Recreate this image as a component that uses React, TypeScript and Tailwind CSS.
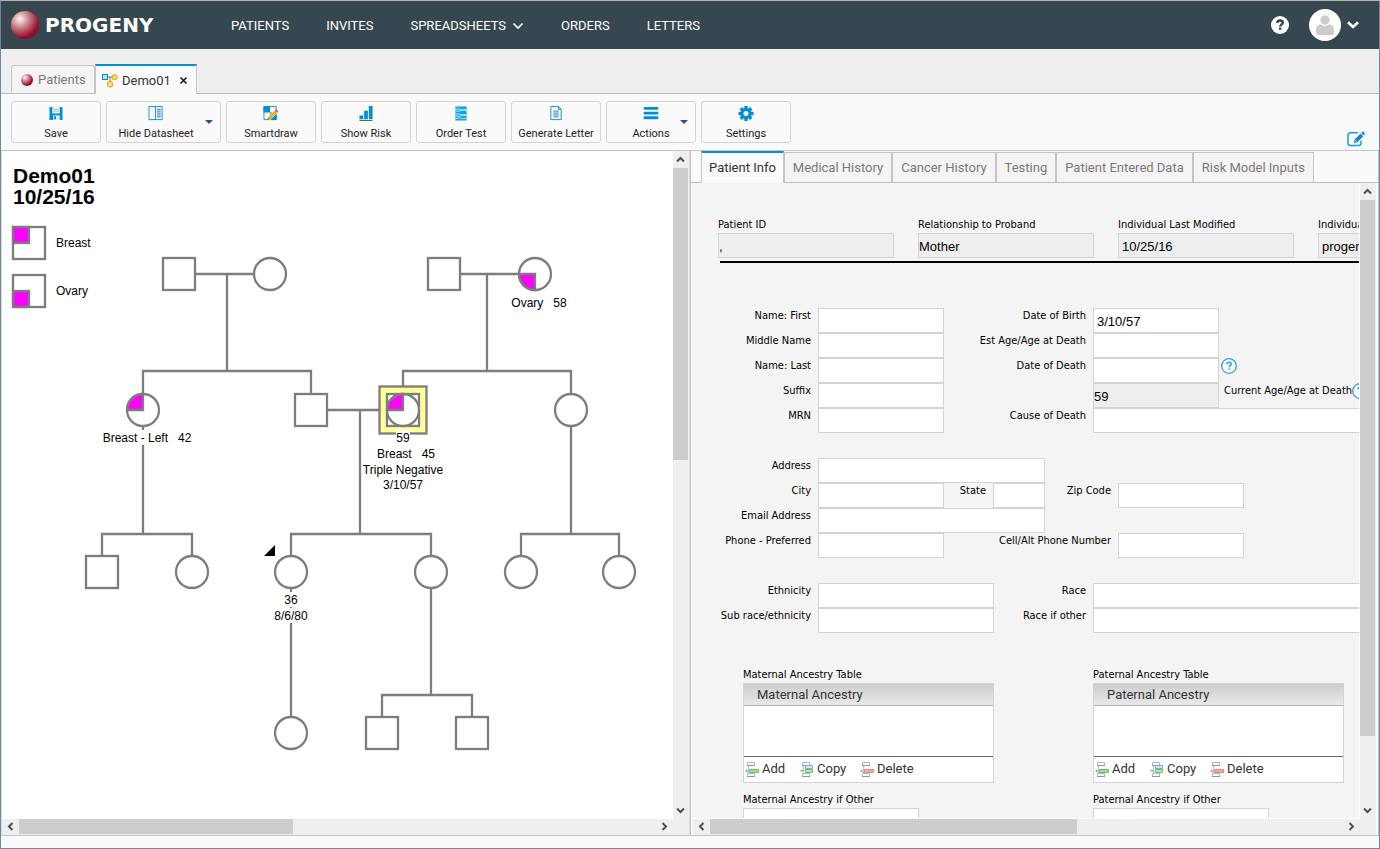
import { useState } from "react";
import type { ReactNode } from "react";

function classNames(...classes: string[]) {
  return classes.filter(Boolean).join(" ");
}

/* ---------- icons ---------- */

function Ball({ id, size }: { id: string; size: number }) {
  return (
    <svg width={size} height={size} viewBox="0 0 28 28" className="shrink-0">
      <defs>
        <radialGradient id={id} cx="0.32" cy="0.28" r="0.78">
          <stop offset="0" stopColor="#fdf3f2" />
          <stop offset="0.2" stopColor="#e3bcbc" />
          <stop offset="0.5" stopColor="#bd6a74" />
          <stop offset="0.85" stopColor="#960f30" />
          <stop offset="1" stopColor="#8d0a2a" />
        </radialGradient>
      </defs>
      <circle cx="14" cy="14" r="14" fill={`url(#${id})`} />
    </svg>
  );
}

function PedigreeIcon() {
  return (
    <svg width="16" height="14" viewBox="0 0 16 14" className="shrink-0">
      <path d="M6 3h4M8 3v5" stroke="#777" fill="none" />
      <rect x="0.5" y="0.5" width="5" height="5" fill="#bfe0fb" stroke="#1583c8" />
      <circle cx="12.5" cy="3.2" r="2.6" fill="#ffdf5a" stroke="#d9a514" />
      <circle cx="8" cy="10.2" r="2.9" fill="#ffdf5a" stroke="#d9a514" />
    </svg>
  );
}

function SaveIcon() {
  return (
    <svg width="16" height="16" viewBox="0 0 16 16">
      <path d="M1 1h13l1 1v13H1z" fill="#008fd5" />
      <path d="M4 1h8v7H4z" fill="#e9eef1" />
      <path d="M5 3.5h6M5 5.5h6" stroke="#b5bfc5" />
      <path d="M5 10h7v5H5z" fill="#e9eef1" />
      <path d="M6 11h2v3H6z" fill="#008fd5" />
    </svg>
  );
}

function DatasheetIcon() {
  return (
    <svg width="16" height="16" viewBox="0 0 16 16">
      <path d="M0.5 0.5h14v14h-14zM7.5 0.5v14" fill="#fff" stroke="#008fd5" />
      <path d="M9 3.5h4M9 5.5h4M9 7.5h4M9 9.5h4M9 11.5h4" stroke="#1672a8" />
    </svg>
  );
}

function SmartdrawIcon() {
  return (
    <svg width="18" height="16" viewBox="0 0 18 16">
      <path d="M1.5 0.5h13v14h-13z" fill="#fff" stroke="#008fd5" />
      <path d="M1 0h7v7H1zM8 7h7v8H8z" fill="#008fd5" />
      <path d="M5 15l1-3.600 7.600-7.300 2.600 2.600-7.600 7.400z" fill="#f5a90b" stroke="#fff" strokeWidth="0.600" />
      <path d="M13.200 4.500l1.300-1.100 2.400 2.400-1.100 1.200z" fill="#dd4a35" />
      <path d="M5 15l.8-2.400 1.600 1.600z" fill="#7a4a12" />
    </svg>
  );
}

function RiskIcon() {
  return (
    <svg width="16" height="16" viewBox="0 0 16 16">
      <path d="M1 10h4v4H1zM6 5h4v9H6zM11 0h4v14h-4z" fill="#008fd5" />
      <path d="M1 15.500H15" stroke="#555" />
    </svg>
  );
}

function DnaIcon() {
  return (
    <svg width="12" height="16" viewBox="0 0 12 16">
      <path d="M0 0.500h12v15H0z" fill="#0fa3e6" />
      <path
        d="M0 3.500c4-1.500 7 2 12 0M0 5c4 2 7-2 12 .5M0 8.500c4-1 7 2 12 .5M0 10.500c4 2 7-2 12 0M0 13.500c4-2 7 1 12-.5"
        stroke="#d5f0fc"
        strokeWidth="0.900"
        fill="none"
      />
    </svg>
  );
}

function LetterIcon() {
  return (
    <svg width="14" height="16" viewBox="0 0 14 16">
      <path d="M1.500 0.500h8l3 3v11h-11z" fill="#fff" stroke="#008fd5" />
      <path d="M9.500 0.500v3h3" fill="none" stroke="#008fd5" />
      <path d="M4 5.500h6M4 7.500h6M4 9.500h6M4 11.500h6" stroke="#1583c8" />
    </svg>
  );
}

function ActionsIcon() {
  return (
    <svg width="16" height="16" viewBox="0 0 16 16">
      <path d="M1.500 2.500h13M1.500 7.500h13M1.500 12.500h13" stroke="#008fd5" strokeWidth="3" strokeLinecap="round" />
    </svg>
  );
}

function GearIcon() {
  return (
    <svg width="16" height="16" viewBox="0 0 16 16">
      <g stroke="#008fd5" strokeWidth="3.600">
        <path d="M8 0v16M0 8h16M2.400 2.400l11.200 11.200M13.600 2.400L2.400 13.600" />
      </g>
      <circle cx="8" cy="8" r="5.800" fill="#008fd5" />
      <circle cx="8" cy="8" r="2.700" fill="#fafafa" />
    </svg>
  );
}

function EditIcon() {
  return (
    <svg width="18" height="16" viewBox="0 0 18 16">
      <path
        d="M11 1.800H3.200A2.200 2.200 0 0 0 1 4v8.300a2.200 2.200 0 0 0 2.200 2.200h8.600a2.200 2.200 0 0 0 2.200-2.200V9.500"
        fill="none"
        stroke="#1b9ae4"
        strokeWidth="1.500"
      />
      <path d="M7 12l.6-3.400 6-6.100 2.700 2.700-6 6.100z" fill="#0f87d6" />
      <path d="M14.200 1.900l1-1c.4-.4 1-.4 1.400 0l1 1c.4.4.4 1 0 1.400l-.9 1z" fill="#0f87d6" />
      <path d="M8.600 9.300l1.200 1.200" stroke="#fff" />
    </svg>
  );
}

function HelpIcon() {
  return (
    <svg width="16" height="16" viewBox="0 0 16 16" className="shrink-0">
      <circle cx="8" cy="8" r="7.300" fill="#fff" stroke="#2d9fe0" strokeWidth="1.300" />
      <path
        d="M5.800 6.200c.1-1.300 1-2 2.200-2s2.200.7 2.200 1.800c0 1.500-2 1.500-2 3.200M8.200 10.600v1.500"
        fill="none"
        stroke="#2d9fe0"
        strokeWidth="1.600"
      />
    </svg>
  );
}

function RowIcon({ kind }: { kind: "add" | "copy" | "delete" }) {
  const fill = kind === "delete" ? "#f5a79c" : kind === "copy" ? "#b9f08a" : "#a5dd8d";
  const stroke = kind === "delete" ? "#e58a80" : "#6fbf63";
  return (
    <svg width="14" height="16" viewBox="0 0 14 16" className="shrink-0">
      <path d="M2.500 1.500h7v3h-7zM2.500 12.500h7v3h-7z" fill="#fff" stroke="#9fb6d8" />
      <path d="M2 4.500h8M2 15.500h8" stroke="#7f96bd" />
      <path d="M3.500 5v7" stroke="#b4c6df" />
      {kind === "copy" && <path d="M5.500 4.500h7v3h-7z" fill="#cfe6ff" stroke="#7aa5ee" />}
      <path d={kind === "copy" ? "M5.500 8.500h7v3h-7z" : "M4.500 8.500h9v3h-9z"} fill={fill} stroke={stroke} />
      {kind === "copy" ? (
        <path d="M0 9h4L2 11z" fill={stroke} />
      ) : (
        <path d="M0 10l2.500-2v4z" fill={stroke} />
      )}
    </svg>
  );
}

/* ---------- scrollbars ---------- */

function Arrow({ dir }: { dir: "up" | "down" | "left" | "right" }) {
  const paths = {
    up: "M1 6.500L4.500 3L8 6.500",
    down: "M1 2.500L4.500 6L8 2.500",
    left: "M6.500 1L3 4.500L6.500 8",
    right: "M2.500 1L6 4.500L2.500 8",
  };
  return (
    <button
      type="button"
      aria-label={`Scroll ${dir}`}
      className={classNames(
        "flex shrink-0 items-center justify-center",
        dir === "up" || dir === "down" ? "h-[17px] w-[15px]" : "h-[15px] w-[17px]"
      )}
    >
      <svg width="9" height="9" viewBox="0 0 9 9">
        <path d={paths[dir]} fill="none" stroke="#505050" strokeWidth="2" />
      </svg>
    </button>
  );
}

function VerticalBar({ thumb }: { thumb: number }) {
  return (
    <div className="flex w-4 shrink-0 flex-col bg-[#efefef]">
      <Arrow dir="up" />
      <div className="flex-1">
        <div className="w-[15px] bg-[#cdcdcd]" style={{ height: `${thumb}%` }} />
      </div>
      <Arrow dir="down" />
    </div>
  );
}

function HorizontalBar({ thumb }: { thumb: number }) {
  return (
    <div className="mr-4 flex h-4 shrink-0">
      <Arrow dir="left" />
      <div className="flex-1">
        <div className="h-[15px] bg-[#cdcdcd]" style={{ width: `${thumb}%` }} />
      </div>
      <Arrow dir="right" />
    </div>
  );
}

/* ---------- header and toolbar ---------- */

const nav = ["PATIENTS", "INVITES", "SPREADSHEETS", "ORDERS", "LETTERS"];

function Header() {
  return (
    <header className="flex h-12 shrink-0 items-center bg-[#37474f] text-white">
      <a href="#" className="ml-[10px] flex w-[220px] items-center gap-[6px]">
        <Ball id="logo-ball" size={28} />
        <span className="font-['DejaVu_Sans',sans-serif] text-[20px] leading-6 font-bold">PROGENY</span>
      </a>
      <nav className="flex items-center gap-[37px] pt-[2px]">
        {nav.map((item) => (
          <a key={item} href="#" className="flex items-center gap-[6px] text-[13px] leading-4">
            {item}
            {item === "SPREADSHEETS" && (
              <svg width="12" height="8" viewBox="0 0 12 8">
                <path d="M1.500 1.500L6 6l4.500-4.500" fill="none" stroke="#fff" strokeWidth="1.700" />
              </svg>
            )}
          </a>
        ))}
      </nav>
      <div className="mr-5 ml-auto flex items-center">
        <button type="button" aria-label="Help" className="mr-5">
          <svg width="18" height="18" viewBox="0 0 18 18">
            <circle cx="9" cy="9" r="9" fill="#fff" />
            <path
              d="M6.200 6.900c.2-1.600 1.300-2.400 2.900-2.400 1.500 0 2.700.8 2.700 2.100 0 1.900-2.600 1.800-2.600 3.800M9.200 11.600v2.200"
              fill="none"
              stroke="#37474f"
              strokeWidth="2.400"
            />
          </svg>
        </button>
        <button type="button" aria-label="Account" className="flex items-center gap-[6px]">
          <svg width="32" height="32" viewBox="0 0 32 32">
            <circle cx="16" cy="16" r="16" fill="#fff" />
            <path d="M7 22c0-4 1.500-6.500 4.500-6.500h9c3 0 4.500 2.500 4.500 6.500v2a2 2 0 0 1-2 2H9a2 2 0 0 1-2-2z" fill="#ccc" />
            <circle cx="16" cy="11" r="5.300" fill="#ccc" stroke="#fff" strokeWidth="1.200" />
          </svg>
          <svg width="12" height="8" viewBox="0 0 12 8">
            <path d="M1 1.200L6 6l5-4.800" fill="none" stroke="#fff" strokeWidth="2.600" />
          </svg>
        </button>
      </div>
    </header>
  );
}

function DocumentTabs() {
  return (
    <div className="flex h-[45px] shrink-0 items-end border-b border-[#bdbdbd] bg-[#eee] pl-[10px] text-[13px] leading-4">
      <button
        type="button"
        className="flex h-7 w-[84px] items-center gap-[5px] rounded-t-[3px] border border-b-0 border-[#c5c5c5] bg-[#f4f4f4] pt-px pl-[9px] text-[#7a7a7a]"
      >
        <Ball id="tab-ball" size={12} />
        Patients
      </button>
      <div className="-mb-px flex h-[30px] w-[102px] items-center border-x border-t-2 border-x-[#c5c5c5] border-t-[#0092d2] bg-[#fafafa] pt-px pl-[6px] text-[#333]">
        <button type="button" className="flex items-center gap-[4px]">
          <PedigreeIcon />
          Demo01
        </button>
        <button type="button" aria-label="Close Demo01" className="ml-2">
          <svg width="9" height="9" viewBox="0 0 9 9">
            <path d="M1.500 1.500l6 6M7.500 1.500l-6 6" stroke="#111" strokeWidth="1.500" />
          </svg>
        </button>
      </div>
    </div>
  );
}

const tools = [
  { name: "Save", icon: <SaveIcon />, width: "w-[90px]", menu: false },
  { name: "Hide Datasheet", icon: <DatasheetIcon />, width: "w-[115px] pr-[15px]", menu: true },
  { name: "Smartdraw", icon: <SmartdrawIcon />, width: "w-[90px]", menu: false },
  { name: "Show Risk", icon: <RiskIcon />, width: "w-[90px]", menu: false },
  { name: "Order Test", icon: <DnaIcon />, width: "w-[90px]", menu: false },
  { name: "Generate Letter", icon: <LetterIcon />, width: "w-[90px]", menu: false },
  { name: "Actions", icon: <ActionsIcon />, width: "w-[90px]", menu: true },
  { name: "Settings", icon: <GearIcon />, width: "w-[90px]", menu: false },
];

function Toolbar() {
  return (
    <div className="flex h-[57px] shrink-0 items-start gap-[5px] border-b border-[#c5c5c5] bg-[#fafafa] pt-[7px] pl-[10px]">
      {tools.map((tool) => (
        <button
          key={tool.name}
          type="button"
          className={classNames(
            "relative flex h-[42px] flex-col items-center gap-[5px] rounded-[3px] border border-[#d3d3d3] pt-[4px] text-[11px] leading-4 whitespace-nowrap text-[#222]",
            tool.width
          )}
        >
          {tool.icon}
          {tool.name}
          {tool.menu && (
            <svg width="8" height="4" viewBox="0 0 8 4" className="absolute top-[18px] right-[7px]">
              <path d="M0 0h8L4 4z" fill="#34489c" />
            </svg>
          )}
        </button>
      ))}
      <button type="button" aria-label="Edit" className="mt-[30px] mr-[14px] ml-auto">
        <EditIcon />
      </button>
    </div>
  );
}

/* ---------- pedigree ---------- */

const males = [
  [179, 274],
  [444, 274],
  [311, 410],
  [102, 572],
  [382, 733],
  [472, 733],
];

const females = [
  [270, 274],
  [535, 274],
  [143, 410],
  [571, 410],
  [192, 572],
  [291, 572],
  [431, 572],
  [521, 572],
  [619, 572],
  [291, 733],
];

const lines = [
  "M195 274H254M227 274V371M143 394V371H311V394",
  "M460 274H519M487 274V371M403 387V371H571V394",
  "M327 410H379M360 410V534M291 556V534H431V556",
  "M143 426V534M102 556V534H192V556",
  "M571 426V534M521 556V534H619V556",
  "M291 588V717",
  "M431 588V695M382 717V695H472V717",
];

const captions = [
  { x: 539, y: 307, w: 58, text: "Ovary   58" },
  { x: 147, y: 442, w: 92, text: "Breast - Left   42" },
  { x: 403, y: 442, w: 14, text: "59" },
  { x: 406, y: 458, w: 60, text: "Breast   45" },
  { x: 403, y: 474, w: 80, text: "Triple Negative" },
  { x: 403, y: 489, w: 40, text: "3/10/57" },
  { x: 291, y: 604, w: 14, text: "36" },
  { x: 291, y: 620, w: 34, text: "8/6/80" },
];

function Pedigree() {
  return (
    <svg
      width="670"
      height="667"
      viewBox="2 151 670 667"
      className="font-['Liberation_Sans',Arial,sans-serif] text-[12px]"
    >
      <g fill="#fff" stroke="#7d7d7d" strokeWidth="2.300">
        {lines.map((d) => (
          <path key={d} d={d} fill="none" />
        ))}
        <rect x="379.500" y="386.500" width="47" height="47" fill="#ffff99" />
        <rect x="387" y="394" width="32" height="32" />
        {males.map(([x, y]) => (
          <rect key={`${x}-${y}`} x={x - 16} y={y - 16} width="32" height="32" />
        ))}
        {females.map(([x, y]) => (
          <circle key={`${x}-${y}`} cx={x} cy={y} r="16" />
        ))}
        <circle cx="403" cy="410" r="16" />
        <path d="M535 274H519A16 16 0 0 0 535 290Z" fill="#f0f" />
        <path d="M143 410H127A16 16 0 0 1 143 394Z" fill="#f0f" />
        <path d="M403 410H387A16 16 0 0 1 403 394Z" fill="#f0f" />
        <rect x="13" y="227" width="32" height="32" />
        <rect x="13" y="227" width="16" height="16" fill="#f0f" />
        <rect x="13" y="275" width="32" height="32" />
        <rect x="13" y="291" width="16" height="16" fill="#f0f" />
      </g>
      <path d="M275 545v11h-11z" fill="#000" />
      <g className="text-[21px] font-bold">
        <text x="13" y="183">Demo01</text>
        <text x="13" y="204">10/25/16</text>
      </g>
      <text x="56" y="247">Breast</text>
      <text x="56" y="295">Ovary</text>
      {captions.map((c) => (
        <g key={c.text}>
          <rect x={c.x - c.w / 2} y={c.y - 12} width={c.w} height="15" fill="#fff" />
          <text x={c.x} y={c.y} textAnchor="middle" className="whitespace-pre">
            {c.text}
          </text>
        </g>
      ))}
    </svg>
  );
}

/* ---------- datasheet ---------- */

function Box({
  id,
  width,
  value = "",
  readOnly = false,
  flush = false,
}: {
  id: string;
  width: string;
  value?: string;
  readOnly?: boolean;
  flush?: boolean;
}) {
  return (
    <input
      id={id}
      type="text"
      defaultValue={value}
      readOnly={readOnly}
      className={classNames(
        "h-[25px] shrink-0 border border-[#d3d3d3] pt-px font-['Liberation_Sans',Arial,sans-serif] text-[13px] text-black outline-none",
        readOnly ? "bg-[#eee]" : "bg-white",
        flush ? "pl-0" : "pl-[3px]",
        width
      )}
    />
  );
}

function Field({
  id,
  label,
  labelWidth,
  width,
  value = "",
}: {
  id: string;
  label: string;
  labelWidth: string;
  width: string;
  value?: string;
}) {
  return (
    <>
      <label htmlFor={id} className={classNames("shrink-0 pr-[7px] text-right", labelWidth)}>
        {label}
      </label>
      <Box id={id} width={width} value={value} />
    </>
  );
}

function Row({ children }: { children: ReactNode }) {
  return <div className="flex h-[25px] items-start">{children}</div>;
}

const summary = [
  { id: "patient-id", label: "Patient ID", value: ",", flush: true },
  { id: "relationship", label: "Relationship to Proband", value: "Mother", flush: true },
  { id: "modified", label: "Individual Last Modified", value: "10/25/16", flush: false },
  { id: "modified-by", label: "Individual Last Modified By", value: "progeny", flush: false },
];

function AncestryTable({ side }: { side: string }) {
  return (
    <div className="w-[251px] shrink-0">
      <div>{side} Ancestry Table</div>
      <div className="border border-[#d3d3d3] bg-white font-[Roboto,sans-serif] text-[13px] text-[#333]">
        <table className="w-full">
          <thead>
            <tr>
              <th className="h-[21px] border-b border-[#b5b5b5] bg-linear-to-b from-[#cecece] to-[#e9e9e9] pt-[2px] pl-[13px] text-left leading-4 font-normal">
                {side} Ancestry
              </th>
            </tr>
          </thead>
          <tbody>
            <tr>
              <td className="h-[51px]" />
            </tr>
          </tbody>
        </table>
        <div className="flex h-[26px] items-center border-t border-[#666] pb-[2px] pl-px leading-4">
          <button type="button" className="flex w-[55px] items-center gap-[3px]">
            <RowIcon kind="add" />
            Add
          </button>
          <button type="button" className="flex w-[60px] items-center gap-[3px]">
            <RowIcon kind="copy" />
            Copy
          </button>
          <button type="button" className="flex items-center gap-[3px]">
            <RowIcon kind="delete" />
            Delete
          </button>
        </div>
      </div>
      <label htmlFor={`${side}-other`} className="mt-[9px] block">
        {side} Ancestry if Other
      </label>
      <Box id={`${side}-other`} width="w-[176px]" />
    </div>
  );
}

function Datasheet() {
  return (
    <form className="pt-[34px] font-['DejaVu_Sans_Condensed','DejaVu_Sans',sans-serif] text-[11px] leading-4 whitespace-nowrap text-black">
      <div className="flex gap-6 pl-[25px]">
        {summary.map((s) => (
          <div key={s.id} className="flex w-[176px] shrink-0 flex-col">
            <label htmlFor={s.id}>{s.label}</label>
            <Box id={s.id} width="w-[176px]" value={s.value} readOnly flush={s.flush} />
          </div>
        ))}
      </div>
      <hr className="mt-[3px] ml-[27px] border-t-2 border-black" />

      <div className="mt-[45px]">
        <Row>
          <Field id="first" label="Name: First" labelWidth="w-[125px]" width="w-[126px]" />
          <Field id="dob" label="Date of Birth" labelWidth="w-[149px]" width="w-[126px]" value="3/10/57" />
        </Row>
        <Row>
          <Field id="middle" label="Middle Name" labelWidth="w-[125px]" width="w-[126px]" />
          <Field id="est-age" label="Est Age/Age at Death" labelWidth="w-[149px]" width="w-[126px]" />
        </Row>
        <Row>
          <Field id="last" label="Name: Last" labelWidth="w-[125px]" width="w-[126px]" />
          <Field id="dod" label="Date of Death" labelWidth="w-[149px]" width="w-[126px]" />
          <button type="button" aria-label="About date of death" className="ml-[2px]">
            <HelpIcon />
          </button>
        </Row>
        <Row>
          <Field id="suffix" label="Suffix" labelWidth="w-[125px]" width="w-[126px]" />
          <div className="w-[149px] shrink-0" />
          <Box id="age" width="w-[126px]" value="59" readOnly flush />
          <label htmlFor="age" className="ml-[5px] shrink-0">
            Current Age/Age at Death
          </label>
          <button type="button" aria-label="About current age">
            <HelpIcon />
          </button>
        </Row>
        <Row>
          <Field id="mrn" label="MRN" labelWidth="w-[125px]" width="w-[126px]" />
          <Field id="cause" label="Cause of Death" labelWidth="w-[149px]" width="w-[300px]" />
        </Row>
      </div>

      <div className="mt-[25px]">
        <Row>
          <Field id="address" label="Address" labelWidth="w-[125px]" width="w-[227px]" />
        </Row>
        <Row>
          <Field id="city" label="City" labelWidth="w-[125px]" width="w-[126px]" />
          <Field id="state" label="State" labelWidth="w-[49px]" width="w-[52px]" />
          <Field id="zip" label="Zip Code" labelWidth="w-[73px]" width="w-[126px]" />
        </Row>
        <Row>
          <Field id="email" label="Email Address" labelWidth="w-[125px]" width="w-[227px]" />
        </Row>
        <Row>
          <Field id="phone" label="Phone - Preferred" labelWidth="w-[125px]" width="w-[126px]" />
          <Field id="cell" label="Cell/Alt Phone Number" labelWidth="w-[174px]" width="w-[126px]" />
        </Row>
      </div>

      <div className="mt-[25px]">
        <Row>
          <Field id="ethnicity" label="Ethnicity" labelWidth="w-[125px]" width="w-[176px]" />
          <Field id="race" label="Race" labelWidth="w-[99px]" width="w-[300px]" />
        </Row>
        <Row>
          <Field id="sub-race" label="Sub race/ethnicity" labelWidth="w-[125px]" width="w-[176px]" />
          <Field id="race-other" label="Race if other" labelWidth="w-[99px]" width="w-[300px]" />
        </Row>
      </div>

      <div className="mt-[34px] flex gap-[99px] pl-[50px]">
        <AncestryTable side="Maternal" />
        <AncestryTable side="Paternal" />
      </div>
    </form>
  );
}

const sheets = [
  "Patient Info",
  "Medical History",
  "Cancer History",
  "Testing",
  "Patient Entered Data",
  "Risk Model Inputs",
];

export default function App() {
  const [sheet, setSheet] = useState("Patient Info");

  return (
    <div className="flex h-screen flex-col overflow-hidden border border-[#76869a] border-t-[#b4b4b4] bg-[#fafafa] font-[Roboto,sans-serif]">
      <Header />
      <DocumentTabs />
      <Toolbar />

      <main className="flex min-h-0 flex-1 border-b border-[#c5c5c5]">
        <section className="flex w-1/2 flex-col border-x border-[#ddd] bg-[#efefef]">
          <div className="flex min-h-0 flex-1">
            <div className="min-w-0 flex-1 overflow-hidden bg-white">
              <Pedigree />
            </div>
            <VerticalBar thumb={46} />
          </div>
          <HorizontalBar thumb={43} />
        </section>

        <section className="flex min-w-0 flex-1 flex-col border-x border-[#c0c0c0]">
          <div className="flex h-8 shrink-0 items-end border-b border-[#c0c0c0] pl-[10px] text-[13px] leading-4">
            {sheets.map((name) => (
              <button
                key={name}
                type="button"
                onClick={() => setSheet(name)}
                className={classNames(
                  "border-x whitespace-nowrap",
                  name === sheet
                    ? "-mb-px h-8 border-t-2 border-x-[#c5c5c5] border-t-[#0092d2] bg-[#fafafa] px-[7px] text-[#333]"
                    : "h-[30px] border-t border-[#c5c5c5] bg-[#f4f4f4] px-2 text-[#7a7a7a]"
                )}
              >
                {name}
              </button>
            ))}
          </div>
          <div className="mr-[2px] ml-[2px] flex min-h-0 flex-1 flex-col bg-[#efefef]">
            <div className="flex min-h-0 flex-1">
              <div className="min-w-0 flex-1 overflow-hidden border-r border-b border-white bg-[#f4f4f4]">
                <Datasheet />
              </div>
              <VerticalBar thumb={89} />
            </div>
            <HorizontalBar thumb={58} />
          </div>
        </section>
      </main>
      <footer className="h-3 shrink-0" />
    </div>
  );
}
